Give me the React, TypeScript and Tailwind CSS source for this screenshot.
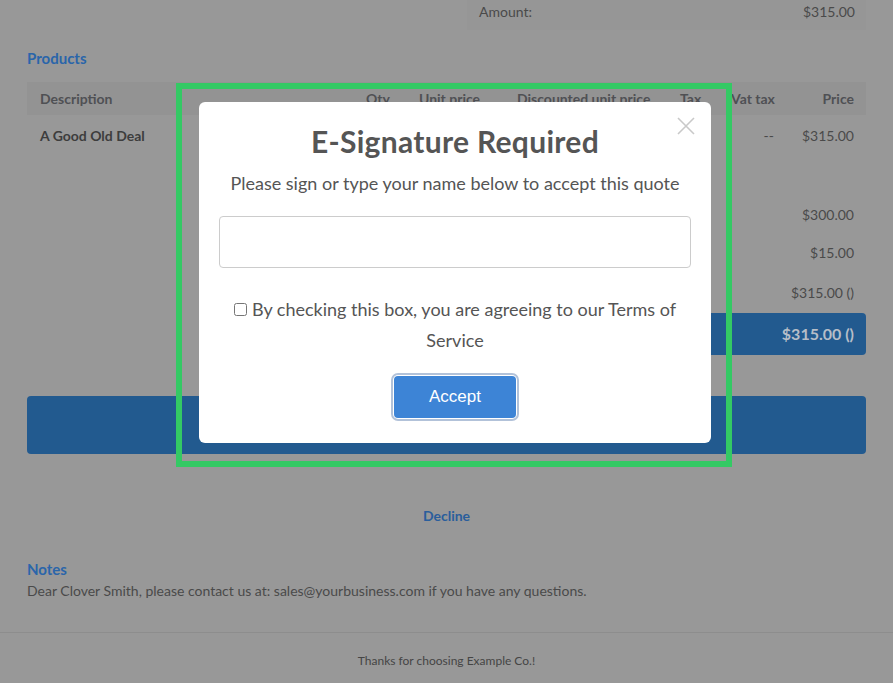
import React from "react";

const font = { fontFamily: "Lato, 'Open Sans', sans-serif" };

export default function App() {
  return (
    <div className="relative w-[893px] h-[683px] overflow-hidden bg-[#989898] text-[#4a4a4a]" style={font}>
      {/* background page (dimmed) */}
      <div className="px-[27px]">
        <div className="flex justify-end">
          <div className="w-[399px] h-[30px] pt-[3px] bg-[#969696] flex justify-between pl-[12px] pr-[11px] text-[14px] leading-[18px]">
            <span>Amount:</span>
            <span>$315.00</span>
          </div>
        </div>
        <div className="mt-[18px] text-[15px] leading-[20px] font-bold text-[#2a65aa]">Products</div>
        <div className="mt-[14px]">
          <div className="h-[33px] bg-[#939393] flex items-center text-[14px] font-bold text-[#4f5054]">
            <div className="pl-[13px] w-[339px]">Description</div>
            <div className="w-[53px]">Qty</div>
            <div className="w-[98px]">Unit price</div>
            <div className="w-[163px]">Discounted unit price</div>
            <div className="w-[51px]">Tax</div>
            <div className="w-[60px]">Vat tax</div>
            <div className="flex-1 text-right pr-[12px]">Price</div>
          </div>
          <div className="h-[40px] flex items-center text-[14px]">
            <div className="pl-[13px] w-[339px] font-bold text-[#3d3d3d]">A Good Old Deal</div>
            <div className="flex-1 text-right pr-[12px] flex justify-end gap-[28px]">
              <span>--</span>
              <span>$315.00</span>
            </div>
          </div>
        </div>
        <div className="mt-[49px] flex flex-col items-end text-[14px]">
          <div className="w-[399px] h-[20px] flex justify-end pr-[12px]">
            <span>$300.00</span>
          </div>
          <div className="w-[399px] h-[20px] mt-[18px] flex justify-end pr-[12px]">
            <span>$15.00</span>
          </div>
          <div className="w-[399px] h-[20px] mt-[20px] flex justify-end pr-[12px]">
            <span>$315.00 ()</span>
          </div>
          <div className="w-[399px] h-[42px] mt-[11px] rounded-[4px] bg-[#225a8f] flex items-center justify-end pr-[12px] text-[16px] font-bold text-[#b6bec8]">
            <span>$315.00 ()</span>
          </div>
        </div>
        <div className="mt-[41px] h-[58px] rounded-[4px] bg-[#225a8f]"></div>
        <div className="mt-[52px] text-center text-[14px] leading-[20px] font-bold text-[#2a5e9c]">Decline</div>
        <div className="mt-[33px] text-[15px] leading-[20px] font-bold text-[#2a65aa]">Notes</div>
        <div className="mt-[2px] text-[14px] leading-[20px]">
          Dear Clover Smith, please contact us at: sales@yourbusiness.com if you have any questions.
        </div>
      </div>
      <div className="mt-[31px] border-t border-[#8d8d8d]"></div>
      <div className="mt-[20px] text-center text-[12px] leading-[16px] text-[#454545]">Thanks for choosing Example Co.!</div>

      {/* modal */}
      <div className="absolute left-[199px] top-[102px] w-[512px] h-[341px] bg-white rounded-[6px] px-[20px] pt-[21px] text-[#555555]">
        <button className="absolute right-[15px] top-[14px] w-[20px] h-[20px] flex items-center justify-center">
          <svg width="18" height="18" viewBox="0 0 18 18" fill="none" stroke="#c9c9c9" strokeWidth="1.6">
            <path d="M1 1 L17 17 M17 1 L1 17" />
          </svg>
        </button>
        <div className="text-center text-[30px] leading-[36px] font-bold tracking-[0.3px]">E-Signature Required</div>
        <div className="mt-[12px] text-center text-[18px] leading-[24px]">Please sign or type your name below to accept this quote</div>
        <input className="mt-[21px] block w-full h-[52px] border border-[#cccccc] rounded-[4px] outline-none" />
        <div className="mt-[26px] text-center text-[18px] leading-[31px]">
          <input type="checkbox" className="w-[13px] h-[13px] align-middle mr-[5px] relative top-[-2px]" />
          By checking this box, you are agreeing to our Terms of Service
        </div>
        <div className="mt-[20px] flex justify-center">
          <button
            className="w-[122px] h-[42px] rounded-[4px] bg-[#3d84d6] text-white text-[17px] ring-2 ring-[#b2c2d9] ring-offset-1 ring-offset-white"
            style={{ fontFamily: "'Liberation Sans', Arial, sans-serif" }}
          >
            Accept
          </button>
        </div>
      </div>

      {/* highlight */}
      <div className="absolute left-[176px] top-[83px] w-[556px] h-[384px] border-[6px] border-[#34c964] pointer-events-none"></div>
    </div>
  );
}
